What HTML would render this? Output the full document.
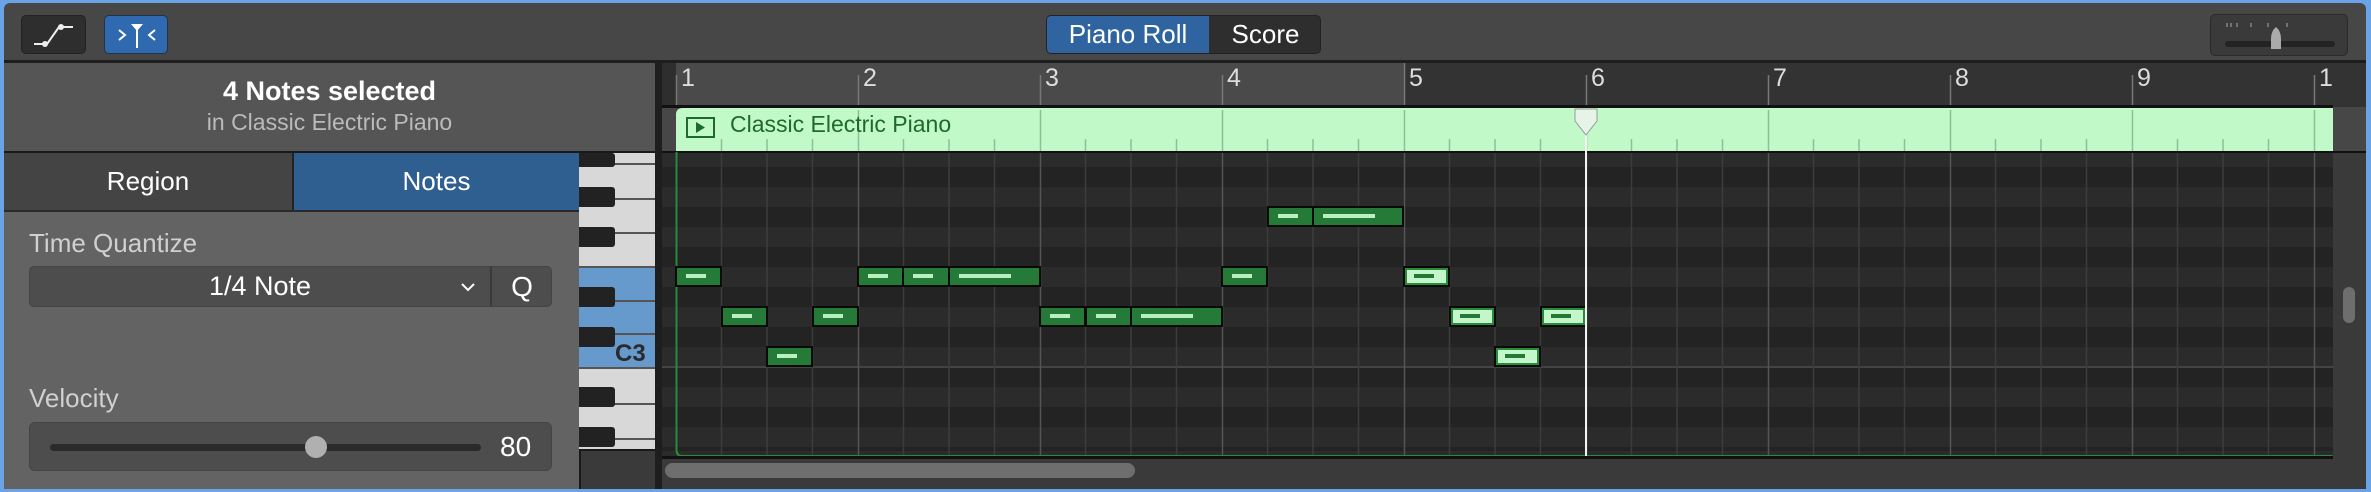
<!DOCTYPE html>
<html><head><meta charset="utf-8"><style>
*{margin:0;padding:0;box-sizing:border-box}
body{width:2371px;height:492px;background:#6aa3e6;font-family:"Liberation Sans",sans-serif;position:relative;overflow:hidden}
.a{position:absolute}
.win{left:4px;top:3px;width:2362px;height:486px;background:#474747;border-radius:6px;overflow:hidden}
.n{position:absolute;height:21px;background:#247a36;border:2px solid #0a0a0a}
.n i{position:absolute;left:9px;top:6px;height:4px;width:20px;background:#b9f0c2}
.n.s{background:#c3f7cb;box-shadow:inset 0 0 0 2px #2a8a3c}
.n.s i{background:#237a35;top:6px}
.t{color:#ddd;font-size:25px}
</style></head><body>
<div class="a win"></div>
<!-- toolbar -->
<div class="a" style="left:4px;top:60px;width:2362px;height:3px;background:#1e1e1e"></div>
<div class="a" style="left:21px;top:15px;width:65px;height:39px;background:#2e2e2e;border-radius:5px;border:1px solid #222">
<svg width="65" height="39" style="position:absolute;left:0;top:0"><path d="M12 28h9M25 28L37 11M41 11h10" stroke="#eee" stroke-width="2" fill="none"/><circle cx="23" cy="28" r="3" fill="#eee"/><circle cx="39" cy="11" r="3" fill="#eee"/></svg></div>
<div class="a" style="left:104px;top:15px;width:64px;height:39px;background:#2f6ab0;border-radius:5px;border:1px solid #234">
<svg width="64" height="39" style="position:absolute;left:0;top:0"><path d="M14 14l6 5-6 5M50 14l-6 5 6 5M32 12v20" stroke="#fff" stroke-width="2" fill="none"/><path d="M26 8h12l-6 7z" fill="#fff"/></svg></div>
<div class="a" style="left:1046px;top:15px;width:275px;height:39px;background:#2e2e2e;border-radius:5px;overflow:hidden;border:1px solid #222">
<div class="a" style="left:0;top:0;width:162px;height:39px;background:#2f64a0;color:#fff;font-size:26px;text-align:center;line-height:37px">Piano Roll</div>
<div class="a" style="left:162px;top:0;width:113px;height:39px;color:#fff;font-size:26px;text-align:center;line-height:37px">Score</div></div>
<div class="a" style="left:2210px;top:14px;width:138px;height:42px;background:#3a3a3a;border-radius:5px;border:1px solid #2a2a2a">
<svg width="138" height="42" style="position:absolute;left:0;top:0"><rect x="14" y="26" width="110" height="6" rx="3" fill="#232323"/><path d="M16 8v4M20 8v4M26 8v4M40 8v4M57 8v4M76 8v4" stroke="#aaa"/><path d="M60 34v-10q0-8 5-12q5 4 5 12v10z" fill="#aaa"/></svg></div>
<!-- info -->
<div class="a" style="left:4px;top:63px;width:651px;height:89px;background:#555"></div>
<div class="a" style="left:4px;top:76px;width:651px;text-align:center;color:#fff;font-weight:bold;font-size:27px">4 Notes selected</div>
<div class="a" style="left:4px;top:109px;width:651px;text-align:center;color:#bbb;font-size:23px">in Classic Electric Piano</div>
<div class="a" style="left:4px;top:151px;width:651px;height:2px;background:#1a1a1a"></div>
<div class="a" style="left:4px;top:153px;width:288px;height:57px;background:#444;color:#fff;font-size:26px;text-align:center;line-height:56px">Region</div>
<div class="a" style="left:292px;top:153px;width:287px;height:57px;background:#2f5e90;color:#fff;font-size:26px;text-align:center;line-height:56px;border-left:2px solid #222">Notes</div>
<div class="a" style="left:4px;top:210px;width:575px;height:279px;background:#636363;border-top:2px solid #2a2a2a"></div>
<div class="a" style="left:29px;top:228px;color:#d0d0d0;font-size:26px">Time Quantize</div>
<div class="a" style="left:29px;top:266px;width:523px;height:41px;background:#4d4d4d;border-radius:5px;border:1px solid #444">
<div class="a" style="left:0;top:0;width:460px;text-align:center;color:#fff;font-size:27px;line-height:39px">1/4 Note</div>
<svg class="a" style="left:430px;top:14px" width="16" height="12"><path d="M2 3l6 6 6-6" stroke="#fff" stroke-width="2" fill="none"/></svg>
<div class="a" style="left:460px;top:0;width:2px;height:39px;background:#3a3a3a"></div>
<div class="a" style="left:462px;top:0;width:60px;text-align:center;color:#fff;font-size:28px;line-height:39px">Q</div></div>
<div class="a" style="left:29px;top:383px;color:#d0d0d0;font-size:26px">Velocity</div>
<div class="a" style="left:29px;top:422px;width:523px;height:49px;background:#4d4d4d;border-radius:6px;border:1px solid #444">
<div class="a" style="left:20px;top:21px;width:431px;height:7px;background:#2a2a2a;border-radius:4px"></div>
<div class="a" style="left:275px;top:13px;width:22px;height:22px;background:#b0b0b0;border-radius:50%"></div>
<div class="a" style="left:470px;top:8px;color:#fff;font-size:28px">80</div></div>
<!-- piano -->
<div class="a" style="left:579px;top:153px;width:76px;height:296px;background:#d8d8d8"></div>
<div class="a" style="left:579px;top:267px;width:76px;height:100px;background:#6699cc"></div>
<div class="a" style="left:579px;top:163px;width:76px;height:2px;background:#555"></div>
<div class="a" style="left:579px;top:198px;width:76px;height:2px;background:#555"></div>
<div class="a" style="left:579px;top:232px;width:76px;height:2px;background:#555"></div>
<div class="a" style="left:579px;top:266px;width:76px;height:2px;background:#555"></div>
<div class="a" style="left:579px;top:300px;width:76px;height:2px;background:#555"></div>
<div class="a" style="left:579px;top:333px;width:76px;height:2px;background:#555"></div>
<div class="a" style="left:579px;top:367px;width:76px;height:2px;background:#555"></div>
<div class="a" style="left:579px;top:403px;width:76px;height:2px;background:#555"></div>
<div class="a" style="left:579px;top:438px;width:76px;height:2px;background:#555"></div>
<div class="a" style="left:579px;top:153px;width:36px;height:14px;background:#222;border-radius:0 3px 3px 0"></div>
<div class="a" style="left:579px;top:187px;width:36px;height:20px;background:#222;border-radius:0 3px 3px 0"></div>
<div class="a" style="left:579px;top:227px;width:36px;height:20px;background:#222;border-radius:0 3px 3px 0"></div>
<div class="a" style="left:579px;top:287px;width:36px;height:20px;background:#222;border-radius:0 3px 3px 0"></div>
<div class="a" style="left:579px;top:327px;width:36px;height:20px;background:#222;border-radius:0 3px 3px 0"></div>
<div class="a" style="left:579px;top:387px;width:36px;height:20px;background:#222;border-radius:0 3px 3px 0"></div>
<div class="a" style="left:579px;top:427px;width:36px;height:20px;background:#222;border-radius:0 3px 3px 0"></div>
<div class="a" style="left:615px;top:340px;color:#2a2a2a;font-weight:bold;font-size:24px">C3</div>
<div class="a" style="left:579px;top:449px;width:76px;height:40px;background:#3a3a3a;border-top:2px solid #1a1a1a;border-left:2px solid #1a1a1a"></div>
<!-- ruler -->
<div class="a" style="left:655px;top:63px;width:7px;height:426px;background:#1e1e1e"></div>
<div class="a" style="left:662px;top:63px;width:742px;height:44px;background:#4a4a4a"></div>
<div class="a" style="left:1404px;top:63px;width:962px;height:44px;background:#333"></div>
<div class="a" style="left:662px;top:63px;width:14px;height:44px;background:#2e2e2e"></div>
<svg class="a" style="left:0;top:0" width="2371" height="492">
<g stroke="#777" stroke-width="1.5"><path d="M676.5 75v32M858.5 75v32M1040.5 75v32M1222.5 75v32M1404.5 63v44M1586.5 75v32M1768.5 75v32M1950.5 75v32M2132.5 75v32M2314.5 75v32"/></g>
</svg>
<div class="a t" style="left:681px;top:64px">1</div>
<div class="a t" style="left:863px;top:64px">2</div>
<div class="a t" style="left:1045px;top:64px">3</div>
<div class="a t" style="left:1227px;top:64px">4</div>
<div class="a t" style="left:1409px;top:64px">5</div>
<div class="a t" style="left:1591px;top:64px">6</div>
<div class="a t" style="left:1773px;top:64px">7</div>
<div class="a t" style="left:1955px;top:64px">8</div>
<div class="a t" style="left:2137px;top:64px">9</div>
<div class="a t" style="left:2319px;top:64px;width:14px;overflow:hidden">10</div>
<!-- grid -->
<div class="a" style="left:662px;top:152px;width:1671px;height:304px;background:repeating-linear-gradient(#2b2b2b 0 20px,#232323 20px 40px);background-position:0 -5px"></div>
<div class="a" style="left:662px;top:366px;width:1671px;height:2px;background:#444"></div>
<svg class="a" style="left:0;top:0" width="2371" height="492">
<g stroke="#3c3c3c" stroke-width="1.5">
<path d="M721.5 152v304M767 152v304M812.5 152v304M903.5 152v304M949 152v304M994.5 152v304M1085.5 152v304M1131 152v304M1176.5 152v304M1267.5 152v304M1313 152v304M1358.5 152v304M1449.5 152v304M1495 152v304M1540.5 152v304M1631.5 152v304M1677 152v304M1722.5 152v304M1813.5 152v304M1859 152v304M1904.5 152v304M1995.5 152v304M2041 152v304M2086.5 152v304M2177.5 152v304M2223 152v304M2268.5 152v304"/></g>
<g stroke="#555" stroke-width="1.5"><path d="M858.5 152v304M1040.5 152v304M1222.5 152v304M1404.5 152v304M1586.5 152v304M1768.5 152v304M1950.5 152v304M2132.5 152v304M2314.5 152v304"/></g>
</svg>
<!-- region header -->
<div class="a" style="left:662px;top:105px;width:1671px;height:3px;background:#111"></div>
<div class="a" style="left:676px;top:108px;width:1657px;height:43px;background:#c1f9c9;border-radius:6px 0 0 0"></div>
<div class="a" style="left:662px;top:151px;width:1704px;height:2px;background:#111"></div>
<svg class="a" style="left:0;top:0" width="2371" height="492">
<g stroke="#8fbf95" stroke-width="1.5"><path d="M721.5 139v12M767 139v12M812.5 139v12M903.5 139v12M949 139v12M994.5 139v12M1085.5 139v12M1131 139v12M1176.5 139v12M1267.5 139v12M1313 139v12M1358.5 139v12M1449.5 139v12M1495 139v12M1540.5 139v12M1631.5 139v12M1677 139v12M1722.5 139v12M1813.5 139v12M1859 139v12M1904.5 139v12M1995.5 139v12M2041 139v12M2086.5 139v12M2177.5 139v12M2223 139v12M2268.5 139v12"/><path d="M858.5 110v41M1040.5 110v41M1222.5 110v41M1404.5 110v41M1586.5 110v41M1768.5 110v41M1950.5 110v41M2132.5 110v41M2314.5 110v41"/></g>
<rect x="687" y="118" width="27" height="19" fill="none" stroke="#1d6a2a" stroke-width="2"/><path d="M696 122v11l9-5.5z" fill="#1d6a2a"/>
<path d="M676.5 152v298q0 6 6 6h1650" stroke="#2a8a3c" stroke-width="2" fill="none"/>
</svg>
<div class="a" style="left:730px;top:111px;color:#1d6a2a;font-size:23px">Classic Electric Piano</div>
<!-- notes -->
<div class="n" style="left:675px;top:266px;width:47px"><i></i></div>
<div class="n" style="left:857px;top:266px;width:47px"><i></i></div>
<div class="n" style="left:902px;top:266px;width:48px"><i></i></div>
<div class="n" style="left:948px;top:266px;width:93px"><i style="width:52px"></i></div>
<div class="n" style="left:1221px;top:266px;width:47px"><i></i></div>
<div class="n s" style="left:1403px;top:266px;width:47px"><i></i></div>
<div class="n" style="left:721px;top:306px;width:47px"><i></i></div>
<div class="n" style="left:812px;top:306px;width:47px"><i></i></div>
<div class="n" style="left:1039px;top:306px;width:47px"><i></i></div>
<div class="n" style="left:1085px;top:306px;width:47px"><i></i></div>
<div class="n" style="left:1130px;top:306px;width:93px"><i style="width:52px"></i></div>
<div class="n s" style="left:1449px;top:306px;width:47px"><i></i></div>
<div class="n s" style="left:1540px;top:306px;width:47px"><i></i></div>
<div class="n" style="left:766px;top:346px;width:47px"><i></i></div>
<div class="n s" style="left:1494px;top:346px;width:47px"><i></i></div>
<div class="n" style="left:1267px;top:206px;width:47px"><i></i></div>
<div class="n" style="left:1312px;top:206px;width:92px"><i style="width:52px"></i></div>
<!-- playhead -->
<div class="a" style="left:1585px;top:108px;width:2px;height:348px;background:#f4f4f4"></div>
<svg class="a" style="left:1573px;top:107px" width="26" height="30"><path d="M2 2h22v12l-11 14-11-14z" fill="#e6f4e8" stroke="#999"/></svg>
<!-- bottom / right scroll -->
<div class="a" style="left:662px;top:456px;width:1671px;height:3px;background:#111"></div>
<div class="a" style="left:662px;top:459px;width:1704px;height:30px;background:#3a3a3a"></div>
<div class="a" style="left:665px;top:463px;width:470px;height:15px;background:#6e6e6e;border-radius:8px"></div>
<div class="a" style="left:2333px;top:153px;width:33px;height:306px;background:#3a3a3a"></div>
<div class="a" style="left:2343px;top:287px;width:12px;height:36px;background:#6e6e6e;border-radius:6px"></div>
</body></html>
